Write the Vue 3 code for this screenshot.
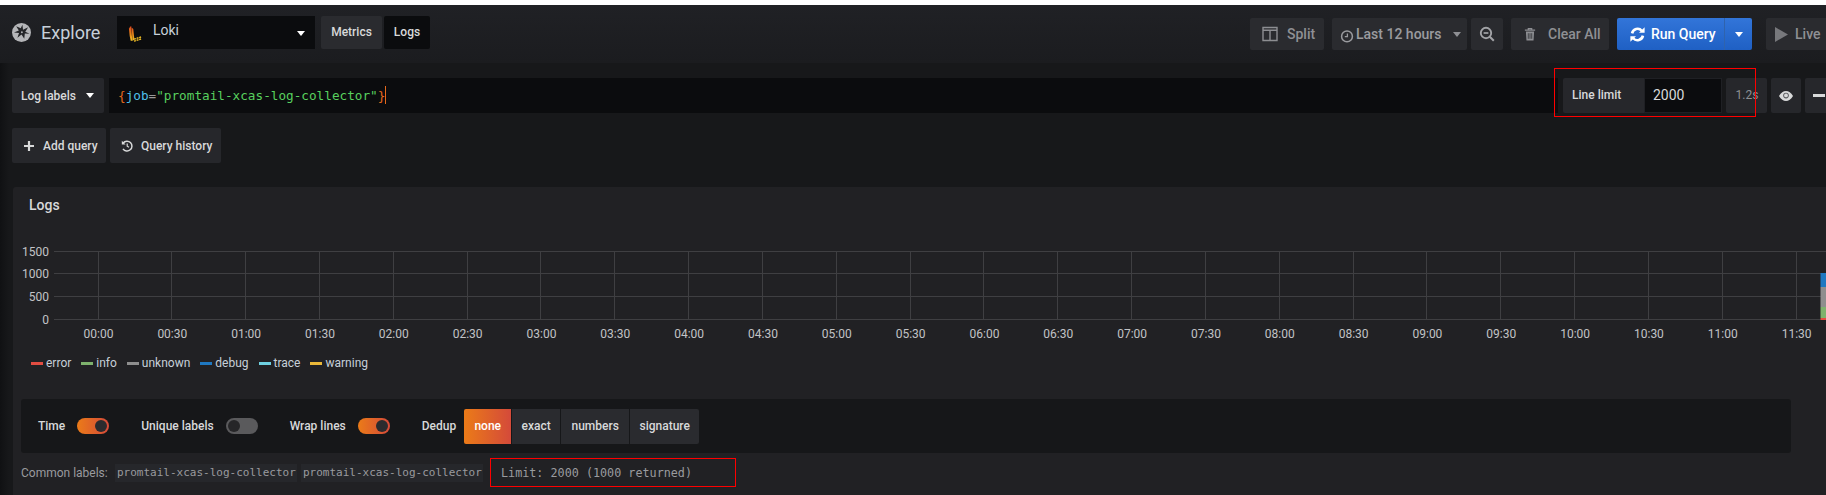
<script setup>
const yLabels = [
  { t: '1500', y: 251 },
  { t: '1000', y: 273 },
  { t: '500', y: 296 },
  { t: '0', y: 319 }
]
const times = []
for (let h = 0; h < 12; h++) {
  const hh = String(h).padStart(2, '0')
  times.push(hh + ':00', hh + ':30')
}
const xTicks = times.map((t, i) => ({ t, x: 98.5 + i * 73.83 }))
const legend = [
  { t: 'error', c: '#e24d42' },
  { t: 'info', c: '#7eb26d' },
  { t: 'unknown', c: '#8e8e8e' },
  { t: 'debug', c: '#1f78c1' },
  { t: 'trace', c: '#6ed0e0' },
  { t: 'warning', c: '#eab839' }
]
const toggles = [
  { t: 'Time', on: true },
  { t: 'Unique labels', on: false },
  { t: 'Wrap lines', on: true }
]
const dedup = ['exact', 'numbers', 'signature']
</script>

<template>
  <div class="page">
    <header class="toolbar">
      <svg class="explore-icon" viewBox="0 0 20 20">
        <circle cx="10" cy="10" r="10" fill="#b4b5b8" />
        <path d="M11 1.800l.6 5.400 5.400-2.700-3 4.600 4.500 2.100-5-.2-.6 5.500-2.900-4.300-4.300 3.400 1.700-5-5.300-.6 5.100-2.200-2.800-4.400 4.800 2.100z" fill="#232427" />
        <circle cx="10.400" cy="9.800" r="1" fill="#b4b5b8" />
      </svg>
      <span class="title">Explore</span>
      <div class="ds-picker">
        <svg class="loki" viewBox="0 0 14 16">
          <defs>
            <linearGradient id="lokiGrad" x1="0" y1="0" x2="0" y2="1">
              <stop offset="0" stop-color="#d9431e" />
              <stop offset=".55" stop-color="#e8861a" />
              <stop offset="1" stop-color="#f5c327" />
            </linearGradient>
          </defs>
          <path d="M.9 2.500L1.700 10l1 4.800h2L3.900 10 3.200 0 1.800 1 1.500 2z M3.700 1.500L5.300 3l.7 7 .4 3.600-1.500 1-.7-4.500z" fill="url(#lokiGrad)" />
          <path d="M6 13.200l7.600-2.400M6 15.200l7.600-2.400" stroke="#f0bd25" stroke-width="1.400" stroke-dasharray="2 .7" fill="none" />
        </svg>
        <span class="ds-name">Loki</span>
        <i class="caret white ds-caret"></i>
      </div>
      <div class="mode-group">
        <span class="mode">Metrics</span>
        <span class="mode active">Logs</span>
      </div>
      <div class="actions">
        <button class="tbtn split">
          <svg viewBox="0 0 16 16" width="16" height="16"><path d="M1 1.500h14v13H1zM1 4.200h14M8 4.200v10.300" fill="none" stroke="#8d8e92" stroke-width="1.400" /></svg>
          <span>Split</span>
        </button>
        <button class="tbtn time">
          <svg viewBox="0 0 14 14" width="14" height="14"><circle cx="7" cy="7.400" r="5.400" fill="none" stroke="#9a9b9f" stroke-width="1.500" /><path d="M7.400 4.400v3.200H4.800" fill="none" stroke="#9a9b9f" stroke-width="1.300" /></svg>
          <span>Last 12 hours</span>
          <i class="caret dim"></i>
        </button>
        <button class="tbtn zoom">
          <svg viewBox="0 0 16 16" width="16" height="16"><circle cx="7" cy="7" r="5.200" fill="none" stroke="#a2a3a7" stroke-width="1.900" /><path d="M4.600 7h4.800" stroke="#a2a3a7" stroke-width="1.700" /><path d="M10.800 10.800l4 4" stroke="#a2a3a7" stroke-width="2" /></svg>
        </button>
        <button class="tbtn clear">
          <svg viewBox="0 0 14 16" width="12" height="15"><path d="M1 3h12M5 3V1.200h4V3" fill="none" stroke="#8d8e92" stroke-width="1.400" /><path d="M2.200 4.500h9.600l-.7 10.500H2.900z" fill="#8d8e92" /><path d="M5 6.500v6.500M7 6.500v6.500M9 6.500v6.500" stroke="#2b2c30" stroke-width=".9" /></svg>
          <span>Clear All</span>
        </button>
        <div class="run-group">
          <button class="run">
            <svg viewBox="0 0 16 16" width="15" height="15"><path d="M2.200 6.800A6 6 0 0 1 12.600 4M13.800 9.200A6 6 0 0 1 3.400 12" fill="none" stroke="#fff" stroke-width="2.800" /><path d="M9.600 6.200h6V.2zM6.400 9.800H.4v6z" fill="#fff" /></svg>
            <span>Run Query</span>
          </button>
          <button class="run-more"><i class="caret white"></i></button>
        </div>
        <button class="tbtn live">
          <svg viewBox="0 0 13 15" width="13" height="15"><path d="M0 0l13 7.500L0 15z" fill="#77787c" /></svg>
          <span>Live</span>
        </button>
      </div>
    </header>

    <section class="query-row">
      <button class="qbtn labels">Log labels <i class="caret white small"></i></button>
      <div class="query-input">
        <span class="o">{</span><span class="b">job</span><span class="g">=</span><span class="gr">"promtail-xcas-log-collector"</span><span class="o">}</span><span class="cursor"></span>
      </div>
      <div class="limit">
        <span class="limit-label">Line limit</span>
        <span class="limit-value">2000</span>
      </div>
      <span class="duration">1.2s</span>
      <button class="qbtn square">
        <svg viewBox="0 0 14 10" width="14" height="10"><path d="M0 5c2-3.400 4.400-5 7-5s5 1.600 7 5c-2 3.400-4.400 5-7 5S2 8.400 0 5z" fill="#d8d9da" /><circle cx="7" cy="4.600" r="2.800" fill="#55565a" /><circle cx="7" cy="4.400" r="1.900" fill="#d8d9da" /></svg>
      </button>
      <button class="qbtn square last"><i class="minus"></i></button>
      <div class="annot annot-limit"></div>
    </section>

    <section class="add-row">
      <button class="qbtn add">
        <svg viewBox="0 0 10 10" width="10" height="10"><path d="M5 0v10M0 5h10" stroke="#d8d9da" stroke-width="2.200" /></svg>
        <span>Add query</span>
      </button>
      <button class="qbtn history">
        <svg viewBox="0 0 12 12" width="12" height="12"><path d="M2.200 3A4.900 4.900 0 1 1 2 8.800" fill="none" stroke="#d8d9da" stroke-width="1.500" /><path d="M.8.800v3.800h3.800z" fill="#d8d9da" /><path d="M6.200 3.400v2.800l1.800 1" fill="none" stroke="#d8d9da" stroke-width="1.200" /></svg>
        <span>Query history</span>
      </button>
    </section>

    <main class="panel">
      <h2 class="panel-title">Logs</h2>
      <svg class="chart" width="1813" height="105" viewBox="13 238 1813 105">
        <g stroke="#3f3f42" stroke-width="1">
          <line v-for="l in yLabels" :key="l.t" x1="54" x2="1826" :y1="l.y + 0.5" :y2="l.y + 0.5" />
          <line v-for="x in xTicks" :key="x.t" :x1="Math.round(x.x) - 0.5" :x2="Math.round(x.x) - 0.5" y1="251" y2="319" />
        </g>
        <text v-for="l in yLabels" :key="'y' + l.t" class="axis" x="49" :y="l.y + 4.500" text-anchor="end">{{ l.t }}</text>
        <text v-for="x in xTicks" :key="'x' + x.t" class="axis" :x="x.x" y="337.500" text-anchor="middle">{{ x.t }}</text>
        <rect x="1820.500" y="273" width="6" height="14" fill="#1f78c1" />
        <rect x="1820.500" y="287" width="6" height="20" fill="#8e8e8e" />
        <rect x="1820.500" y="307" width="6" height="11" fill="#7eb26d" />
        <rect x="1820.500" y="318" width="6" height="2" fill="#e24d42" />
      </svg>
      <ul class="legend">
        <li v-for="l in legend" :key="l.t">
          <i class="swatch" :style="{ background: l.c }"></i>{{ l.t }}
        </li>
      </ul>
      <div class="controls">
        <div v-for="t in toggles" :key="t.t" class="toggle-wrap">
          <span class="ctl-label">{{ t.t }}</span>
          <span class="toggle" :class="{ on: t.on }"><i></i></span>
        </div>
        <span class="ctl-label dedup-label">Dedup</span>
        <div class="dedup">
          <span class="dd active">none</span>
          <span v-for="d in dedup" :key="d" class="dd">{{ d }}</span>
        </div>
      </div>
      <div class="meta">
        <span class="common">Common labels:</span>
        <span class="tag">promtail-xcas-log-collector</span>
        <span class="tag">promtail-xcas-log-collector</span>
        <span class="limit-note">Limit: 2000 (1000 returned)</span>
      </div>
    </main>
  </div>
</template>

<style>
html, body {
  margin: 0;
  background: #161719;
  overflow: hidden;
}
</style>

<style scoped>
* { box-sizing: border-box; }
.page {
  width: 1826px;
  height: 495px;
  overflow: hidden;
  border-top: 5px solid #fff;
  background: linear-gradient(90deg, #101113 0, #17181a 9px, #17181a 100%);
  font-family: Roboto, "Liberation Sans", sans-serif;
  color: #d8d9da;
}
button { font-family: inherit; border: 0; margin: 0; padding: 0; }
.toolbar {
  height: 58px;
  display: flex;
  align-items: flex-start;
  padding: 11px 0 0 12px;
  background: linear-gradient(180deg, #202125, #1b1c1f);
}
.explore-icon { width: 19px; height: 19px; margin-top: 7px; flex: none; }
.title { font-size: 18px; line-height: 33px; margin-left: 10px; width: 76px; color: #c7d0d9; }
.ds-picker {
  width: 198px;
  height: 33px;
  background: #0b0c0e;
  display: flex;
  align-items: center;
  padding-left: 11px;
  position: relative;
  flex: none;
}
.loki { width: 14px; height: 16px; margin-top: 3px; }
.ds-name { font-size: 14px; margin-left: 11px; margin-top: -6px; color: #c7d0d9; }
.ds-caret { position: absolute; left: 180px; top: 15px; }
.mode-group { display: flex; margin-left: 6px; gap: 2px; }
.mode {
  height: 33px;
  line-height: 33px;
  font-size: 12px;
  font-weight: 500;
  width: 61px;
  text-align: center;
  background: #2a2b2f;
  border-radius: 2px;
  color: #d8d9da;
}
.mode.active { width: 46px; background: #0b0c0e; }
.actions { margin-left: auto; display: flex; gap: 8px; margin-top: 2px; white-space: nowrap; }
.tbtn {
  height: 32px;
  background: #2a2b2f;
  border-radius: 2px;
  color: #8f9094;
  font-size: 14px;
  font-weight: 500;
  display: flex;
  align-items: center;
  flex: none;
}
.split { width: 74px; padding-left: 12px; gap: 9px; }
.time { width: 135px; padding-left: 8px; gap: 2px; color: #9a9b9f; }
.time .caret { margin-left: 9px; }
.time svg { margin-top: 3px; }
.zoom { width: 32px; justify-content: center; margin-left: -4px; }
.clear { width: 98px; padding-left: 13px; gap: 12px; }
.run-group { display: flex; margin-right: 6px; flex: none; }
.run {
  width: 107px;
  height: 32px;
  background: linear-gradient(180deg, #3275d9, #1f60c4);
  border-radius: 2px 0 0 2px;
  color: #fff;
  font-size: 14px;
  font-weight: 500;
  display: flex;
  align-items: center;
  padding-left: 13px;
  gap: 6px;
}
.run-more {
  width: 28px;
  height: 32px;
  background: linear-gradient(180deg, #3275d9, #1f60c4);
  border-left: 1px solid #2f63ad;
  border-radius: 0 2px 2px 0;
  display: flex;
  align-items: center;
  justify-content: center;
}
.live { width: 60px; padding-left: 9px; gap: 7px; border-radius: 2px 0 0 2px; }
.caret {
  display: inline-block;
  width: 0;
  height: 0;
  border-left: 4.500px solid transparent;
  border-right: 4.500px solid transparent;
  border-top: 5px solid #fff;
}
.caret.dim { border-top-color: #8f9094; }
.caret.small { margin-left: 6px; }
.query-row {
  position: relative;
  display: flex;
  align-items: stretch;
  height: 35px;
  margin-top: 15px;
  padding-left: 12px;
  white-space: nowrap;
}
.qbtn {
  background: #26272b;
  border-radius: 2px;
  color: #d8d9da;
  font-size: 12px;
  font-weight: 500;
  display: flex;
  align-items: center;
  flex: none;
}
.labels { width: 92px; padding-left: 9px; gap: 4px; }
.query-input {
  margin-left: 5px;
  width: 1449px;
  flex: none;
  background: #0b0c0e;
  padding-left: 9px;
  font-family: "DejaVu Sans Mono", monospace;
  font-size: 12.700px;
  line-height: 35px;
  color: #d8d9da;
}
.o { color: #e5691c; }
.b { color: #4fc0ec; }
.g { color: #9a9a9a; }
.gr { color: #58d05e; }
.cursor {
  display: inline-block;
  width: 1px;
  height: 18px;
  background: #e5691c;
  vertical-align: -4px;
}
.limit { display: flex; margin-left: 5px; flex: none; width: 159px; }
.limit-label {
  width: 81px;
  background: #26272b;
  font-size: 12px;
  font-weight: 500;
  line-height: 35px;
  padding-left: 9px;
  border-radius: 2px 0 0 2px;
}
.limit-value {
  width: 78px;
  background: #0b0c0e;
  border: 1px solid #1f2024;
  font-size: 14px;
  line-height: 33px;
  padding-left: 8px;
}
.duration {
  width: 41px;
  margin-left: 4px;
  background: #26272b;
  font-size: 12px;
  line-height: 35px;
  text-align: center;
  padding-left: 1px;
  color: #8f9094;
  border-radius: 2px;
  flex: none;
}
.square { width: 30px; justify-content: center; margin-left: 4px; }
.square.last { justify-content: flex-start; padding-left: 8px; }
.minus { width: 12px; height: 3px; background: #d8d9da; display: block; }
.annot { position: absolute; border: 1px solid #f00; pointer-events: none; }
.annot-limit { left: 1554px; top: -10px; width: 202px; height: 49px; }
.add-row { display: flex; gap: 4px; margin-top: 15px; padding-left: 12px; height: 35px; }
.add { width: 94px; padding-left: 12px; gap: 9px; }
.history { width: 111px; padding-left: 11px; gap: 8px; }
.panel {
  margin: 24px 0 0 13px;
  height: 308px;
  background: #212124;
  border-radius: 3px 0 0 0;
  padding-top: 10px;
  position: relative;
}
.panel-title { margin: 0; padding-left: 16px; font-size: 14px; font-weight: 500; line-height: 16px; color: #d8d9da; }
.chart { display: block; margin-top: 25px; }
.axis { font-family: Roboto, "Liberation Sans", sans-serif; font-size: 12px; fill: #c2c3c6; }
.legend {
  list-style: none;
  margin: 13px 0 0;
  padding: 0 0 0 18px;
  display: flex;
  gap: 10px;
  font-size: 12px;
  line-height: 14px;
  color: #c7d0d9;
}
.legend li { display: flex; align-items: center; }
.swatch { width: 12px; height: 3px; margin-right: 3px; }
.controls {
  margin: 29px 0 0 8px;
  width: 1770px;
  height: 54px;
  background: #161719;
  border-radius: 3px;
  display: flex;
  align-items: center;
  padding-left: 17px;
}
.toggle-wrap { display: flex; align-items: center; margin-right: 32px; }
.ctl-label { font-size: 12px; font-weight: 500; color: #d8d9da; }
.toggle {
  width: 32px;
  height: 16px;
  border-radius: 8px;
  background: #5a5a5c;
  margin-left: 12px;
  position: relative;
  display: block;
}
.toggle i {
  position: absolute;
  left: 2px;
  top: 2px;
  width: 12px;
  height: 12px;
  border-radius: 50%;
  background: #262628;
}
.toggle.on { background: linear-gradient(90deg, #eb7b18, #d44a3a); }
.toggle.on i { left: 18px; background: #2b2b2e; }
.dedup-label { margin-left: 0; margin-right: 8px; }
.dedup { display: flex; height: 35px; gap: 1px; }
.dd {
  background: #2a2b2f;
  font-size: 12px;
  font-weight: 500;
  line-height: 35px;
  text-align: center;
  color: #d8d9da;
  width: 68px;
}
.dd:nth-child(2) { width: 48px; }
.dd.active {
  width: 47px;
  color: #fff;
  background: linear-gradient(90deg, #eb7b18, #d44a3a);
  border-radius: 2px 0 0 2px;
}
.dd:last-child { width: 69px; border-radius: 0 2px 2px 0; }
.meta { position: relative; display: flex; align-items: center; margin: 11px 0 0 8px; height: 18px; white-space: nowrap; }
.common { font-size: 12px; color: #9a9b9f; width: 94px; flex: none; }
.tag {
  font-family: "DejaVu Sans Mono", monospace;
  font-size: 11px;
  color: #9a9b9f;
  background: #26272b;
  height: 18px;
  line-height: 18px;
  padding: 0 2px;
  margin-right: 4px;
  width: 182px;
  flex: none;
}
.limit-note {
  font-family: "DejaVu Sans Mono", monospace;
  font-size: 11.750px;
  color: #9a9b9f;
  height: 29px;
  line-height: 29px;
  width: 246px;
  padding-left: 10px;
  margin: -2px 0 0 3px;
  border: 1px solid #f00;
  flex: none;
}
</style>
